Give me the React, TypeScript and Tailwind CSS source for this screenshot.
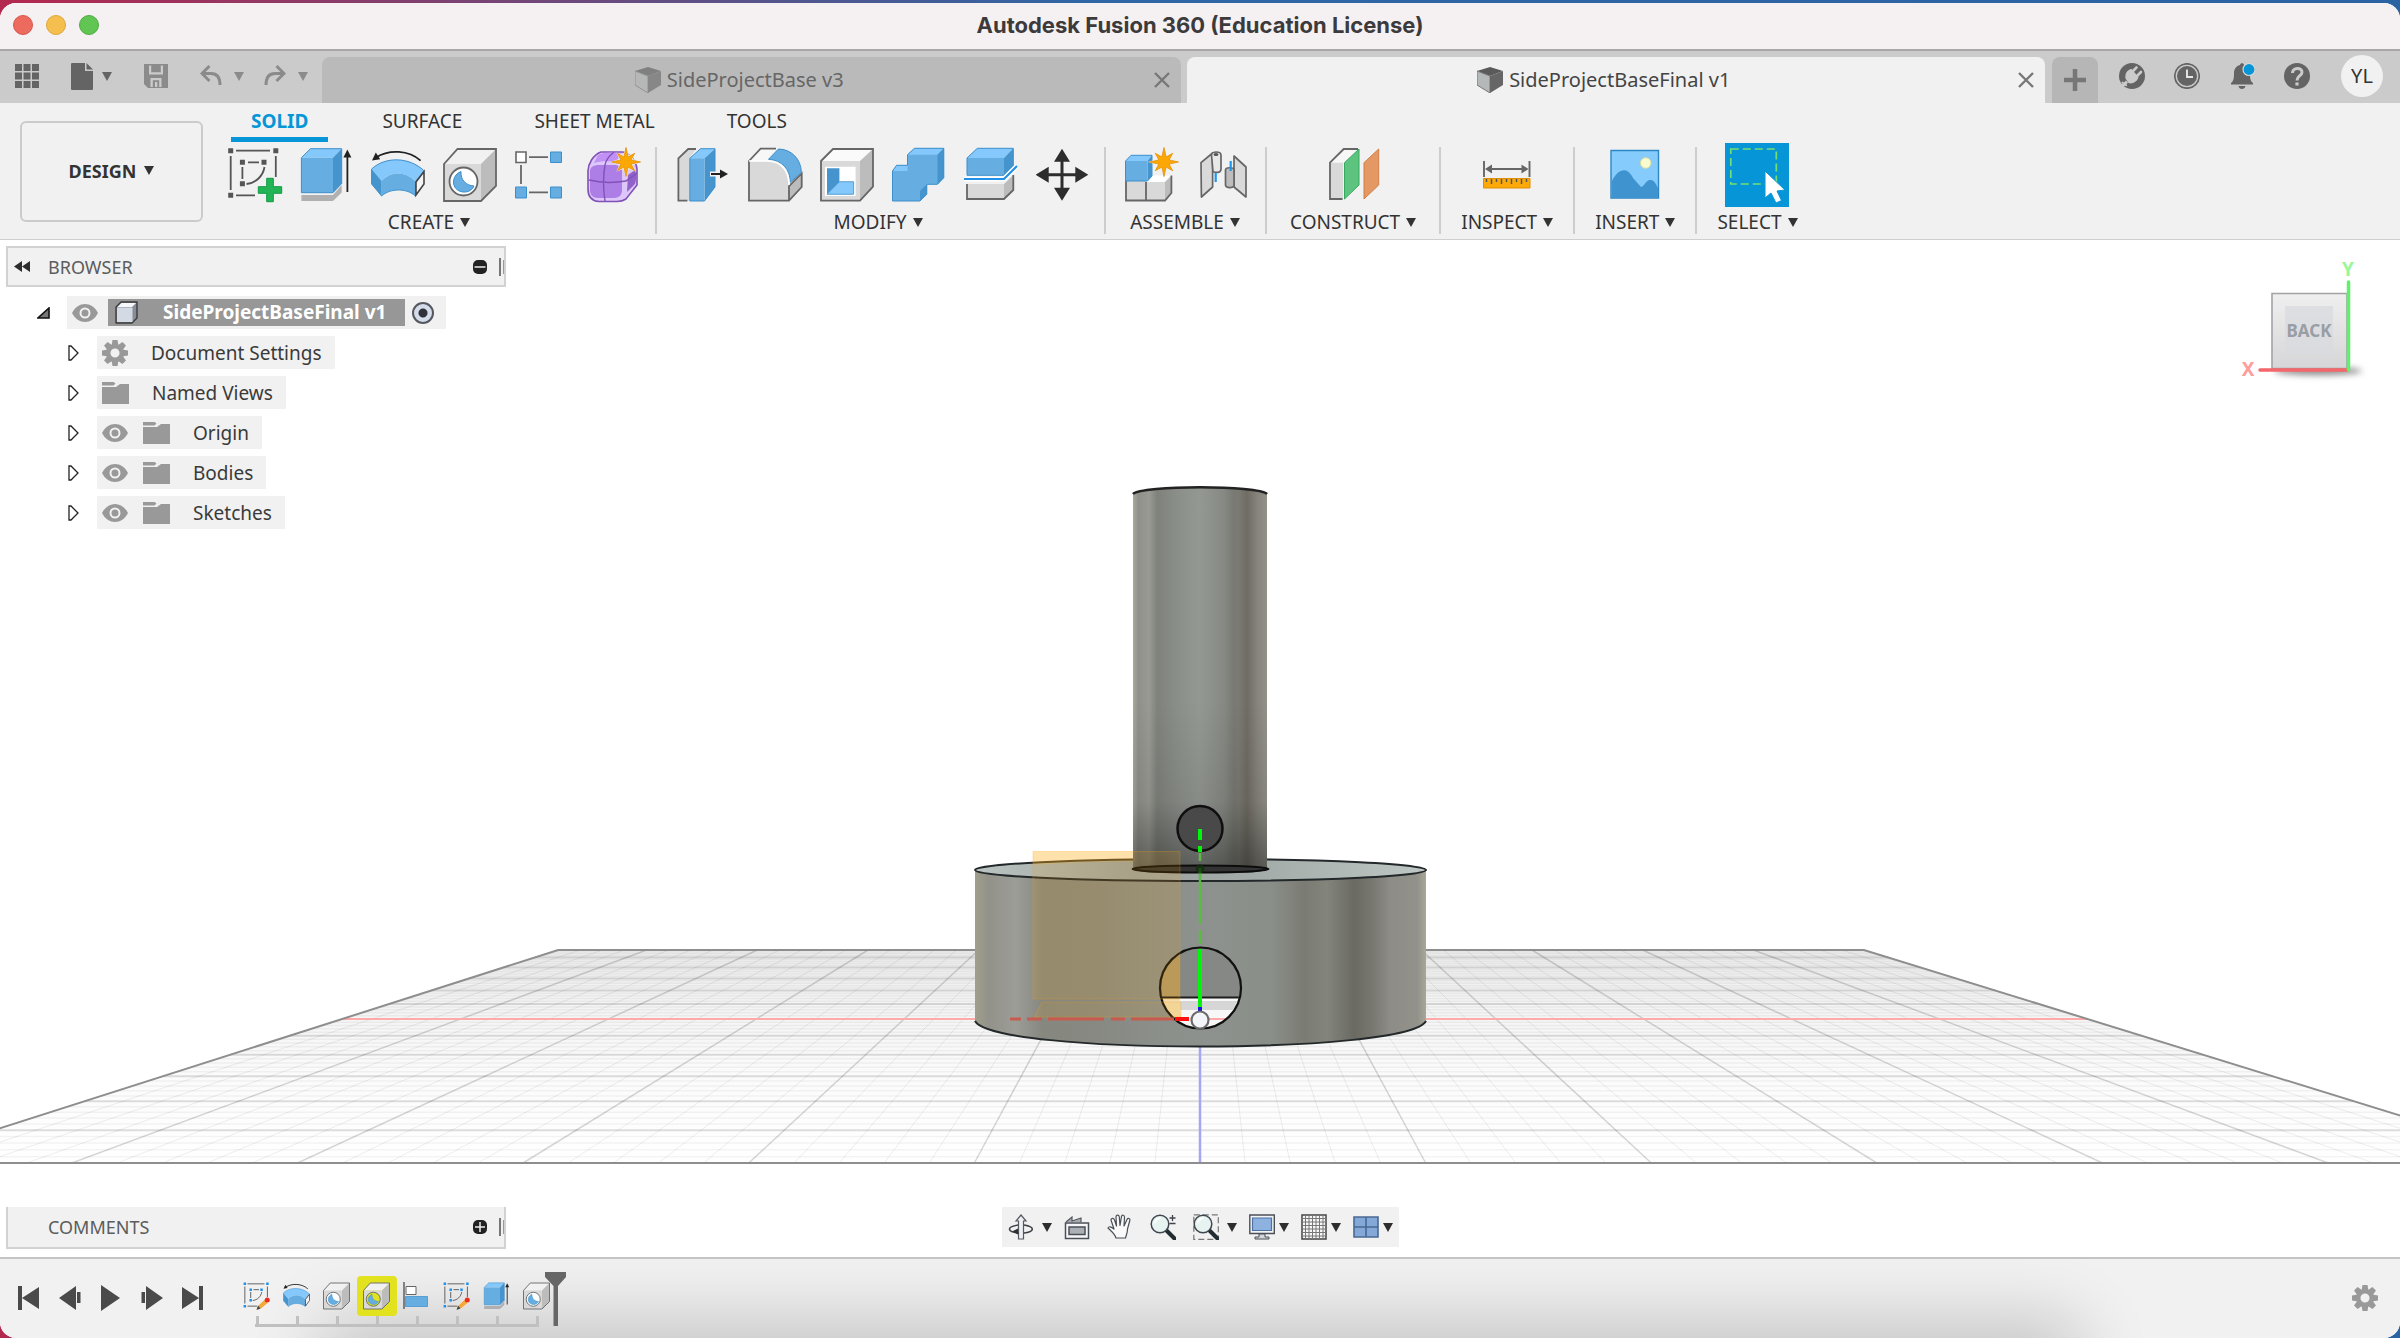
import { useState } from 'react';
import type { ReactNode } from 'react';

const BLUE = '#66aee2';
const BLUE_LIGHT = '#85c8fb';
const BLUE_DARK = '#4594cd';
const BLUE_LINE = '#3d8fcb';
const GRAY = '#d9d9d9';
const LINE = '#666666';

const starPoints = (cx: number, cy: number, outer: number, inner: number) =>
  Array.from({ length: 16 }, (_, i) => {
    const angle = (Math.PI / 8) * i - Math.PI / 2;
    const r = i % 2 ? inner : i % 4 ? outer * 0.85 : outer;
    return `${(cx + r * Math.cos(angle)).toFixed(1)},${(cy + r * Math.sin(angle)).toFixed(1)}`;
  }).join(' ');

function Caret({ className = 'text-[#333]' }: { className?: string }) {
  return (
    <svg viewBox="0 0 10 9" className={`h-[9px] w-[10px] shrink-0 ${className}`} fill="currentColor">
      <path d="M0 0h10L5 9z" />
    </svg>
  );
}

function Icon({ children, className = 'h-14 w-14' }: { children: ReactNode; className?: string }) {
  return (
    <svg viewBox="0 0 56 56" className={`shrink-0 ${className}`} fill="none">
      {children}
    </svg>
  );
}

/* ---------- shared shapes (ribbon and timeline) ---------- */

const SketchShape = ({ node = '#555' }: { node?: string }) => (
  <>
    <path d="M9 3.7h34M3.7 9v34M48.8 9v21M9 48.3h19M21 15.3h11M15.4 20v12" stroke="#555" strokeWidth="1.8" />
    <path d="M37.5 20C36 29 29 36 19.5 37" stroke="#555" strokeWidth="1.8" />
    <path
      d="M1.2 1.2h5v5h-5zM46.3 1.2h5v5h-5zM1.2 45.8h5v5h-5zM12.9 12.8h5v5h-5zM34.5 12.8h5v5h-5zM12.9 34.2h5v5h-5z"
      fill={node}
    />
  </>
);

const ExtrudeShape = () => (
  <>
    <path d="M2.4 48H34l8.7-10v7.5L34 54H2.4z" fill="#b0b0b0" />
    <path d="M2.4 10.7l9.1-9h31.2l-8.7 9z" fill={BLUE_LIGHT} />
    <path d="M34 10.7l8.7-9v34.8L34 45.7z" fill={BLUE_DARK} />
    <path d="M2.4 10.7H34v35H2.4z" fill={BLUE} />
    <path d="M2.4 10.7l9.1-9h31.2v34.8L34 45.7H2.4z" stroke={BLUE_LINE} />
    <path d="M48.4 8v37" stroke="#222" strokeWidth="1.8" />
    <path d="M48.4 2.5l4 8h-8z" fill="#222" />
  </>
);

const RevolveShape = () => (
  <>
    <path d="M.6 22C14 9.5 38 9.5 53 23.7l-8.6 11C35 24 20 24 10.6 34z" fill={BLUE_LIGHT} />
    <path d="M10.6 34C20 24 35 24 44.4 34.7V49C36 41 19 41 10.6 49z" fill={BLUE} />
    <path d="M.6 22l10 12v15L.6 37z" fill={BLUE_DARK} />
    <path d="M.6 22C14 9.5 38 9.5 53 23.7l-8.6 11V49C36 41 19 41 10.6 49L.6 37z" stroke={BLUE_LINE} />
    <path d="M45 35l8-10.5V37l-8 11z" fill="#f4f4f4" stroke="#444" strokeWidth="1.6" />
    <path d="M5 10.5C18 2 38 3 49.6 13.7" stroke="#222" strokeWidth="1.8" />
    <path d="M1 13.5l3.8-8 4.4 6.7z" fill="#222" />
  </>
);

const HoleShape = ({ fill = '#fff' }: { fill?: string }) => (
  <>
    <path d="M1 17L14.5 2H53L38 17z" fill="#f1f1f1" />
    <path d="M38 17L53 2v37L38 54z" fill="#bcbcbc" />
    <path d="M1 17h37v37H1z" fill={GRAY} />
    <path d="M1 17L14.5 2H53v37L38 54H1z" stroke={LINE} strokeWidth="1.8" />
    <circle cx="20.5" cy="34.5" r="14" fill={fill} stroke={LINE} strokeWidth="1.8" />
    <path d="M18 24.5c-8.5 3-10 14-3.5 18.5 6 4 14 2 16.5-4-8-.5-13.5-6-13-14.5z" fill={BLUE} stroke={BLUE_LINE} />
  </>
);

const PencilShape = () => (
  <>
    <path d="M27 56l3-9 13-12 7 7-13 11z" fill="#f3a93c" stroke="#f1f1f1" strokeWidth="1.5" />
    <path d="M27 56l3-9 5 6z" fill="#444" />
    <circle cx="48.5" cy="36" r="5" fill="#ec2d23" />
  </>
);

const Star = () => (
  <>
    <polygon points={starPoints(39, 15, 16, 7.5)} fill="#f1f1f1" />
    <polygon points={starPoints(39, 15, 14.5, 5.5)} fill="#fda703" stroke="#e39007" strokeWidth=".8" />
  </>
);

/* ---------- ribbon ---------- */

type Tool = { name: string; icon: ReactNode };
type ToolGroup = { label: string; tools: Tool[]; className: string; labelClass?: string };

const groups: ToolGroup[] = [
  {
    label: 'CREATE',
    className: 'pl-5 pr-3',
    labelClass: 'mr-3',
    tools: [
      {
        name: 'Create Sketch',
        icon: (
          <Icon>
            <SketchShape />
            <path d="M39.7 31.3h6.6v8.4h8.4v6.6h-8.4v8.4h-6.6v-8.4h-8.4v-6.6h8.4z" fill="#22b455" stroke="#0f9a41" />
          </Icon>
        ),
      },
      { name: 'Extrude', icon: <Icon><ExtrudeShape /></Icon> },
      { name: 'Revolve', icon: <Icon><RevolveShape /></Icon> },
      { name: 'Hole', icon: <Icon><HoleShape /></Icon> },
      {
        name: 'Rectangular Pattern',
        icon: (
          <Icon>
            <path d="M14 10.2h19M6 18v19M14 45.3h19" stroke={LINE} strokeWidth="1.8" />
            <path d="M1 5h10v10.5H1z" fill="#fff" stroke={LINE} strokeWidth="1.6" />
            <path d="M35.5 5h11v10.5h-11zM.5 40h11v11H.5zM35.5 40h11v11h-11z" fill={BLUE} stroke={BLUE_LINE} />
          </Icon>
        ),
      },
      {
        name: 'Create Form',
        icon: (
          <Icon>
            <path d="M1 24C1 17 6 8 14 5h21c6 0 14 8 15 17v16L39 52c-3 2-6 2.5-9 2.5H12C4 54 1 49 1 42z" fill="#dcc6fa" stroke="#8151b8" strokeWidth="1.6" />
            <path d="M11 8c7-3 17-3 23-1l-5 8c-8-1-16-1-22 1z" fill="#c191f6" />
            <path d="M3 24c0-4 4-6 9-6h16c5 0 7 3 7 7v18c0 5-3 8-8 8H11c-5 0-8-3-8-8z" fill="#ad7ee6" />
            <path d="M41 28l7-5c2 5 1 11 0 14l-8 8z" fill="#9062c9" />
            <path d="M2 33c12 3 25 3 37 1l11-8M18 18c-2 11-2 23 0 36M18 18c1-6 4-9 9-13" stroke="#8151b8" strokeWidth="1.4" />
            <Star />
          </Icon>
        ),
      },
    ],
  },
  {
    label: 'MODIFY',
    className: 'pl-[19px] pr-3',
    labelClass: 'mr-3',
    tools: [
      {
        name: 'Press Pull',
        icon: (
          <Icon>
            <path d="M2.4 11.3l9.8-9.6H20l-7 10v42H2.4z" fill={GRAY} />
            <path d="M20 2h-7.8L2.4 11.3v42.4h9" stroke={LINE} strokeWidth="1.8" />
            <path d="M13.8 11.3l10.7-9.6H39l-10.5 9.6z" fill={BLUE_LIGHT} />
            <path d="M28.5 11.3L39 1.7V40L28.5 54z" fill={BLUE_DARK} />
            <path d="M13.8 11.3h14.7V54H13.8z" fill={BLUE} />
            <path d="M13.8 11.3l10.7-9.6H39V40L28.5 54H13.8z" stroke={BLUE_LINE} />
            <path d="M34 27h12" stroke="#f1f1f1" strokeWidth="5" />
            <path d="M35 27h10" stroke="#222" strokeWidth="2.2" />
            <path d="M44 22.5l8 4.5-8 4.5z" fill="#222" />
          </Icon>
        ),
      },
      {
        name: 'Fillet',
        icon: (
          <Icon>
            <path d="M1 14L12.6 1.7H30L20.5 14z" fill="#f7f7f7" />
            <path d="M41 39l12.7-12.7V40L41 53.7z" fill="#bcbcbc" />
            <path d="M1 14h19.5C33 14 41 22 41 35v18.7H1z" fill={GRAY} />
            <path d="M28 1.7H12.6L1 14v39.7h40L53.7 40V26.3L41 39v14" stroke={LINE} strokeWidth="1.8" />
            <path d="M20.5 12.3L30.4 2C43 2 53.3 12 53.3 25.3l-11 10C42 22 34 13 20.5 12.3z" fill={BLUE} stroke={BLUE_LINE} />
            <path d="M1 14h18C33 14 41 23 41 38" stroke="#fff" strokeWidth="1.6" />
          </Icon>
        ),
      },
      {
        name: 'Shell',
        icon: (
          <Icon>
            <path d="M1 14L13 2h40L40 14z" fill="#fafafa" />
            <path d="M40 14L53 2v37.7l-13 14z" fill="#bcbcbc" />
            <path d="M1 14h39v39.7H1z" fill={GRAY} />
            <path d="M1 14L13 2h40v37.7l-13 14H1z" stroke={LINE} strokeWidth="1.8" />
            <path d="M5 19.7h30.6V49H5z" fill="#fff" />
            <path d="M7 21.3h12.4v13.4L7 47.3z" fill={BLUE_DARK} />
            <path d="M7 47.3l12.4-12.6h14.2v12.6z" fill={BLUE_LIGHT} stroke={BLUE_LINE} strokeWidth=".8" />
          </Icon>
        ),
      },
      {
        name: 'Combine',
        icon: (
          <Icon>
            <path d="M.5 24l4-5.7h11V7.7l7-6.4h29.3v29.4l-6.3 6.6H34.8v10L28 54H.5z" fill={BLUE} />
            <path d="M15.5 7.7l7-6.4h29.3l-6.3 6.4zM.5 24l4-5.7h11V24z" fill={BLUE_LIGHT} />
            <path d="M45.5 7.7l6.3-6.4v29.4l-6.3 6.6zM28 44l6.8-6.7v10L28 54z" fill={BLUE_DARK} />
            <path d="M.5 24l4-5.7h11V7.7l7-6.4h29.3v29.4l-6.3 6.6H34.8v10L28 54H.5z" stroke={BLUE_LINE} />
          </Icon>
        ),
      },
      {
        name: 'Split Body',
        icon: (
          <Icon>
            <path d="M3 37h37v15H3z" fill={GRAY} />
            <path d="M40 37l9.3-9v15L40 52z" fill="#bcbcbc" />
            <path d="M3 37v15h37l9.3-9V28" stroke={LINE} strokeWidth="1.8" />
            <path d="M3 11l10.3-9.7h36L40 11z" fill={BLUE_LIGHT} />
            <path d="M40 11l9.3-9.7V19L40 28.3z" fill={BLUE_DARK} />
            <path d="M3 11h37v17.3H3z" fill={BLUE} />
            <path d="M3 11l10.3-9.7h36V19L40 28.3H3z" stroke={BLUE_LINE} />
            <path d="M0 32h40l13-13" stroke="#fff" strokeWidth="5" />
            <path d="M0 32h40l13-13" stroke="#2290e6" strokeWidth="2.2" />
          </Icon>
        ),
      },
      {
        name: 'Move/Copy',
        icon: (
          <Icon>
            <path d="M26 10v35M9 27.7h34" stroke="#2d2d2d" strokeWidth="3" />
            <path d="M26 1.7l8 13H18zM26 53.7l8-13H18zM-.3 27.7l13-8v16zM52.3 27.7l-13-8v16z" fill="#2d2d2d" />
          </Icon>
        ),
      },
    ],
  },
  {
    label: 'ASSEMBLE',
    className: 'pl-[19px] pr-3',
    labelClass: 'mr-2',
    tools: [
      {
        name: 'New Component',
        icon: (
          <Icon>
            <path d="M1 34h20v19.5H1zM21 35h19v18.5H21z" fill={GRAY} />
            <path d="M21 35l6-6.5h19.4L40 35z" fill="#fff" />
            <path d="M40 35l6.4-6.5V46L40 53.5z" fill="#bcbcbc" />
            <path d="M1 34v19.5h39l6.4-7.5V28.5M21 35v18" stroke={LINE} strokeWidth="1.8" />
            <path d="M.5 14L6 8.3h21L22.5 14z" fill={BLUE_LIGHT} />
            <path d="M22.5 14L27 8.3V29l-4.5 5z" fill={BLUE_DARK} />
            <path d="M.5 14h22v20H.5z" fill={BLUE} />
            <path d="M.5 14L6 8.3h21V29l-4.5 5H.5z" stroke={BLUE_LINE} />
            <Star />
          </Icon>
        ),
      },
      {
        name: 'Joint',
        icon: (
          <Icon>
            <path d="M4 15.7L15.6 6v34L4.4 50z" fill={GRAY} stroke={LINE} strokeWidth="1.7" strokeLinejoin="round" />
            <path d="M14.5 8c0-4 9.5-4 9.5 0v14c0 4-5 4-8 2.5z" fill="#e8e8e8" stroke={LINE} strokeWidth="1.7" />
            <ellipse cx="19" cy="7.5" rx="2.5" ry="1.5" fill="#555" />
            <path d="M18.7 26v9" stroke="#1f96ee" strokeWidth="2.2" />
            <path d="M37 9l12 11v30L37 40z" fill={GRAY} stroke={LINE} strokeWidth="1.7" strokeLinejoin="round" />
            <path d="M28.5 23c0-3 8.5-3 8.5 0v16c-2 2.5-8.5 2-8.5-1z" fill="#bdbdbd" stroke={LINE} strokeWidth="1.7" />
            <path d="M33.7 14v10" stroke="#1f96ee" strokeWidth="2.2" />
          </Icon>
        ),
      },
    ],
  },
  {
    label: 'CONSTRUCT',
    className: 'px-[23px]',
    tools: [
      {
        name: 'Offset Plane',
        icon: (
          <Icon>
            <path d="M5 15.7L18.7 2H33L18 15.7z" fill="#f7f7f7" />
            <path d="M5 15.7h13V52H5z" fill={GRAY} />
            <path d="M33 2H18.7L5 15.7V52h12.5" stroke={LINE} strokeWidth="1.8" />
            <path d="M19.5 15.7L34 2v36L19.5 52z" fill="#5cc47f" stroke="#37a95f" />
            <path d="M39 15.7L53.7 2v36L39 52z" fill="#e49964" stroke="#cf7f47" />
          </Icon>
        ),
      },
    ],
  },
  {
    label: 'INSPECT',
    className: 'px-5',
    tools: [
      {
        name: 'Measure',
        icon: (
          <Icon>
            <path d="M5 14v16M50.5 14v16M10 22h36" stroke={LINE} strokeWidth="1.9" />
            <path d="M6 22l7-4.5v9zM49.5 22l-7-4.5v9z" fill={LINE} />
            <path d="M4.5 31.5H51V41H4.5z" fill="#fda908" stroke="#df8f05" />
            <path d="M7.5 32v3M12.5 32v5M17.5 32v3M22.5 32v5M27.5 32v3M32.5 32v5M37.5 32v3M42.5 32v5M47.5 32v3" stroke="#555" strokeWidth="1.5" />
          </Icon>
        ),
      },
    ],
  },
  {
    label: 'INSERT',
    className: 'px-5',
    tools: [
      {
        name: 'Canvas',
        icon: (
          <Icon>
            <path d="M4 3.5h47.5V51H4z" fill="#85ccfd" stroke="#2e86c5" strokeWidth="1.4" />
            <circle cx="38.7" cy="16" r="5.3" fill="#fbfbd0" stroke="#d8d9a2" />
            <path d="M5 34c6-12 15-15 21-3l8 9c4-1 5-8 10-7 3 0 5 4 7 8v10H5z" fill="#3f93cf" />
          </Icon>
        ),
      },
    ],
  },
  {
    label: 'SELECT',
    className: 'px-5',
    tools: [
      {
        name: 'Select',
        icon: (
          <span className="-my-1 block">
            <svg viewBox="0 0 64 64" className="h-16 w-16 bg-[#0696d7]" fill="none">
              <path d="M5.8 6h45.5v35H5.8z" stroke="#74de72" strokeWidth="1.7" strokeDasharray="8 4" />
              <path d="M40 28v27l6-5 5 10 5.5-2.5L52 48l8-1z" fill="#fff" stroke="#0696d7" />
            </svg>
          </span>
        ),
      },
    ],
  },
];

const workspaceTabs = ['SOLID', 'SURFACE', 'SHEET METAL', 'TOOLS'];

function Ribbon() {
  const [activeTab, setActiveTab] = useState('SOLID');

  return (
    <div className="flex border-b border-[#cfcfcf] bg-[#f1f1f1] pb-[5px]">
      <button
        type="button"
        className="ml-5 mt-[18px] flex h-[101px] w-[183px] shrink-0 items-center justify-center gap-2 rounded-md border-2 border-[#cbcbcb] pb-[2px] text-lg font-bold"
      >
        DESIGN <Caret />
      </button>
      <div className="ml-1">
        <div className="ml-6 flex h-[39px] gap-9">
          {workspaceTabs.map((tab, i) => (
            <button
              key={tab}
              type="button"
              onClick={() => setActiveTab(tab)}
              className={`border-b-[5px] pt-[2px] text-[19px] leading-8 ${i === 0 ? 'px-5' : 'px-[18px]'} ${
                tab === activeTab ? 'border-[#0696d7] font-bold text-[#0696d7]' : 'border-transparent'
              }`}
            >
              {tab}
            </button>
          ))}
        </div>
        <div className="mt-[5px] flex">
          {groups.map((group, i) => (
            <div
              key={group.label}
              className={`flex flex-col items-center ${group.className} ${i < groups.length - 1 ? 'border-r-2 border-[#cdcdcd]' : ''}`}
            >
              <div className="flex h-14 gap-4">
                {group.tools.map((tool) => (
                  <button key={tool.name} type="button" aria-label={tool.name}>
                    {tool.icon}
                  </button>
                ))}
              </div>
              <button
                type="button"
                className={`mt-[7px] flex h-6 items-center gap-[6px] text-[19px] leading-6 ${group.labelClass ?? ''}`}
              >
                {group.label} <Caret />
              </button>
            </div>
          ))}
        </div>
      </div>
    </div>
  );
}

/* ---------- title bar and document tabs ---------- */

function TitleBar() {
  return (
    <div className="relative flex h-[48px] items-center justify-center border-b-2 border-[#a9a7a8] bg-[#f5f1f3] pb-[2px]">
      <div className="absolute left-[13px] flex gap-[13px]">
        <button type="button" aria-label="Close" className="h-5 w-5 rounded-full border border-[#d9564b] bg-[#ec6a5e]" />
        <button type="button" aria-label="Minimize" className="h-5 w-5 rounded-full border border-[#dda63c] bg-[#f4bf4f]" />
        <button type="button" aria-label="Zoom" className="h-5 w-5 rounded-full border border-[#51ab42] bg-[#61c554]" />
      </div>
      <h1 className="font-['Inter',sans-serif] text-[22px] leading-7 font-bold text-[#3c3a3b]">
        Autodesk Fusion 360 (Education License)
      </h1>
    </div>
  );
}

function CubeIcon() {
  return (
    <svg viewBox="0 0 26 26" className="h-[26px] w-[26px]">
      <path d="M0 4L13 0l13 4-13 5z" fill="#5a5a5a" />
      <path d="M0 4l13 5v17L0 18z" fill="#b5b8b8" stroke="#777" />
      <path d="M26 4L13 9v17l13-8z" fill="#666" />
    </svg>
  );
}

function DocumentTab({ title, active }: { title: string; active?: boolean }) {
  return (
    <div
      className={`relative flex h-[46px] flex-1 items-center justify-center gap-[6px] rounded-t-lg pr-6 ${
        active ? 'bg-[#f1f1f1] text-[#444]' : 'bg-[#bababa] text-[#666]'
      }`}
    >
      <span className={active ? '' : 'opacity-60'}>
        <CubeIcon />
      </span>
      <button type="button" className="text-xl leading-6">
        {title}
      </button>
      <button type="button" aria-label={`Close ${title}`} className="absolute right-[11px] text-[#777]">
        <svg viewBox="0 0 16 16" className="h-4 w-4" stroke="currentColor" strokeWidth="2.4">
          <path d="M1 1l14 14M15 1L1 15" />
        </svg>
      </button>
    </div>
  );
}

function DocumentBar() {
  return (
    <div className="flex h-[52px] items-end bg-[#cbcbcb]">
      <div className="flex h-[52px] w-[322px] shrink-0 items-center pb-[2px] pl-[15px] text-[#646464]">
        <button type="button" aria-label="Data Panel">
          <svg viewBox="0 0 24 24" className="h-6 w-6" fill="currentColor">
            <path d="M0 0h7v7H0zM8.5 0h7v7h-7zM17 0h7v7h-7zM0 8.5h7v7H0zM8.5 8.5h7v7h-7zM17 8.5h7v7h-7zM0 17h7v7H0zM8.5 17h7v7h-7zM17 17h7v7h-7z" />
          </svg>
        </button>
        <button type="button" aria-label="File" className="ml-8 flex items-center gap-[9px]">
          <svg viewBox="0 0 22 27" className="h-[27px] w-[22px]" fill="currentColor">
            <path d="M1 0h13v8h8v18a1 1 0 0 1-1 1H1a1 1 0 0 1-1-1V1a1 1 0 0 1 1-1zM15.5 0L22 6.5h-6.5z" />
          </svg>
          <Caret className="text-[#646464]" />
        </button>
        <button type="button" aria-label="Save" className="ml-8 text-[#8b8b8b]">
          <svg viewBox="0 0 24 24" className="h-6 w-6" fill="currentColor">
            <path fillRule="evenodd" d="M0 0h24v24H4l-4-4zM5 1.5v9h14v-9h-2.2v6.8H7.2V1.5zM6.5 14v9h2.3v-6.8h6.4V23h2.3v-9zM11 18h2.3v5H11z" />
          </svg>
        </button>
        <button type="button" aria-label="Undo" className="ml-8 flex items-center gap-3 text-[#8b8b8b]">
          <svg viewBox="0 0 22 22" className="h-[22px] w-[22px]" fill="none" stroke="currentColor" strokeWidth="3">
            <path d="M9.5 1L2 8.5 9.5 16M2.5 8.5H11c6 0 9 4 9 11.5" />
          </svg>
          <Caret className="text-[#8b8b8b]" />
        </button>
        <button type="button" aria-label="Redo" className="ml-5 flex items-center gap-3 text-[#8b8b8b]">
          <svg viewBox="0 0 22 22" className="h-[22px] w-[22px]" fill="none" stroke="currentColor" strokeWidth="3">
            <path d="M12.5 1L20 8.5 12.5 16M19.5 8.5H11c-6 0-9 4-9 11.5" />
          </svg>
          <Caret className="text-[#8b8b8b]" />
        </button>
      </div>
      <div className="flex flex-1 gap-[6px]">
        <DocumentTab title="SideProjectBase v3" />
        <DocumentTab title="SideProjectBaseFinal v1" active />
      </div>
      <button
        type="button"
        aria-label="New Design"
        className="ml-[7px] flex h-[46px] w-[46px] items-center justify-center rounded-t-lg bg-[#b6b6b6] text-[#777]"
      >
        <svg viewBox="0 0 22 22" className="h-[22px] w-[22px]" stroke="currentColor" strokeWidth="4.5">
          <path d="M11 0v22M0 11h22" />
        </svg>
      </button>
      <div className="flex h-[52px] items-center gap-[29px] pb-[2px] pl-[21px] pr-[17px] text-[#646464]">
        <button type="button" aria-label="Extensions">
          <svg viewBox="0 0 26 26" className="h-[26px] w-[26px]">
            <circle cx="13" cy="13" r="13" fill="currentColor" />
            <path d="M6.5 15.5c-1-5 2-9 6-9.5l7 8c-1 4.5-6 7.5-10 6z" fill="#cbcbcb" />
            <path d="M13 9l4.5-4.5M17.5 13.5L22 9" stroke="#cbcbcb" strokeWidth="2.6" strokeLinecap="round" />
            <path d="M8 18.5L2.5 24" stroke="#cbcbcb" strokeWidth="3" />
            <path d="M3 19c1.5 2 3 3 5 3.5" stroke="#cbcbcb" strokeWidth="2" fill="none" />
          </svg>
        </button>
        <button type="button" aria-label="Job Status">
          <svg viewBox="0 0 26 26" className="h-[26px] w-[26px]" fill="none">
            <circle cx="13" cy="13" r="12.2" stroke="currentColor" strokeWidth="1.7" />
            <circle cx="13" cy="13" r="10" fill="currentColor" />
            <path d="M13 6.5V14h6" stroke="#e6e6e6" strokeWidth="1.9" />
          </svg>
        </button>
        <button type="button" aria-label="Notifications">
          <svg viewBox="0 0 26 26" className="h-[26px] w-[26px]">
            <path d="M11 2c0-2.5 4-2.5 4 0 4 1 6 4 6 8 0 6 .5 8 3 10v1.5H2V20c2.5-2 3-4 3-10 0-4 2-7 6-8zM9.5 23h7c-.5 4-6.5 4-7 0z" fill="currentColor" />
            <circle cx="20" cy="6.5" r="6" fill="#0696d7" stroke="#d6d6d6" strokeWidth="1.2" />
          </svg>
        </button>
        <button type="button" aria-label="Help">
          <svg viewBox="0 0 26 26" className="h-[26px] w-[26px]" fill="none">
            <circle cx="13" cy="13" r="13" fill="currentColor" />
            <path d="M8.5 10c0-6 9.5-6 9.5-.8 0 3.4-5 3.6-5 8.2" stroke="#cbcbcb" strokeWidth="3" />
            <path d="M11.4 19.5h3.2v3h-3.2z" fill="#cbcbcb" />
          </svg>
        </button>
        <button
          type="button"
          className="ml-[2px] h-[42px] w-[42px] rounded-full bg-[#f1f1f1] text-xl leading-[42px] text-[#333]"
        >
          YL
        </button>
      </div>
    </div>
  );
}

/* ---------- 3D scene ---------- */

const HORIZON = 745;
const FRONT = 1163;
const BACK = 950;
const depthToY = (j: number) => HORIZON + 1 / (0.00365 - 0.0002107 * j);
const colToX = (u: number, y: number) => 1200 + u * 0.5398 * (y - HORIZON);

const LEFT_COL = -5.8;
const RIGHT_COL = 6;

function Grid() {
  const cols = Array.from({ length: 59 }, (_, i) => i - 29);
  const rows = Array.from({ length: 59 }, (_, i) => i - 29);
  const outline = [
    [LEFT_COL, BACK],
    [RIGHT_COL, BACK],
    [RIGHT_COL, FRONT],
    [LEFT_COL, FRONT],
  ]
    .map(([u, y]) => `${colToX(u, y)},${y}`)
    .join(' ');

  return (
    <g>
      <polygon points={outline} fill="url(#floor)" />
      {cols.map((c) => (
        <line
          key={`c${c}`}
          x1={colToX(c / 5, BACK)}
          y1={BACK}
          x2={colToX(c / 5, FRONT)}
          y2={FRONT}
          stroke="#000"
          strokeOpacity={c % 5 ? 0.07 : 0.16}
          strokeWidth={c % 5 ? 1 : 1.5}
        />
      ))}
      {rows.map((r) => {
        const y = depthToY(r / 5);
        return (
          <line
            key={`r${r}`}
            x1={colToX(LEFT_COL, y)}
            y1={y}
            x2={colToX(RIGHT_COL, y)}
            y2={y}
            stroke="#000"
            strokeOpacity={r % 5 ? 0.045 : 0.13}
            strokeWidth={r % 5 ? 1.5 : 2}
          />
        );
      })}
      <line x1={colToX(LEFT_COL, 1019)} y1="1019" x2={colToX(RIGHT_COL, 1019)} y2="1019" stroke="#ffa9a9" strokeWidth="2" />
      <line x1="1200" y1="1019" x2="1200" y2={FRONT} stroke="#a6a6f6" strokeWidth="2.5" />
      <polygon points={outline} fill="none" stroke="#8e8e8e" strokeWidth="2" />
    </g>
  );
}

function Scene() {
  return (
    <svg viewBox="0 240 2400 1017" preserveAspectRatio="xMidYMid slice" className="absolute inset-0 h-full w-full">
      <defs>
        <linearGradient id="floor" x1="0" y1="0" x2="0" y2="1">
          <stop offset="0" stopColor="#eeeeee" />
          <stop offset=".6" stopColor="#fbfbfb" />
          <stop offset="1" stopColor="#ffffff" />
        </linearGradient>
        <linearGradient id="disc">
          <stop offset="0" stopColor="#a09f8c" />
          <stop offset=".03" stopColor="#92928a" />
          <stop offset=".09" stopColor="#9c9d97" />
          <stop offset=".15" stopColor="#86877f" />
          <stop offset=".28" stopColor="#878982" />
          <stop offset=".4" stopColor="#8b8f8a" />
          <stop offset=".52" stopColor="#8e928e" />
          <stop offset=".66" stopColor="#8a8e88" />
          <stop offset=".73" stopColor="#7a7b73" />
          <stop offset=".78" stopColor="#83857d" />
          <stop offset=".84" stopColor="#6a6a63" />
          <stop offset=".88" stopColor="#77766f" />
          <stop offset=".92" stopColor="#8d8c86" />
          <stop offset=".98" stopColor="#92918a" />
          <stop offset="1" stopColor="#a9a797" />
        </linearGradient>
        <linearGradient id="pillar">
          <stop offset="0" stopColor="#a9aa9c" />
          <stop offset=".04" stopColor="#8f9089" />
          <stop offset=".12" stopColor="#999a93" />
          <stop offset=".18" stopColor="#7f827c" />
          <stop offset=".35" stopColor="#8c908b" />
          <stop offset=".5" stopColor="#949893" />
          <stop offset=".68" stopColor="#868983" />
          <stop offset=".75" stopColor="#787a73" />
          <stop offset=".79" stopColor="#7b7a72" />
          <stop offset=".85" stopColor="#6f6c64" />
          <stop offset=".93" stopColor="#86847c" />
          <stop offset="1" stopColor="#93938a" />
        </linearGradient>
        <linearGradient id="pillarShade" x1="0" y1="0" x2="0" y2="1">
          <stop offset="0" stopColor="#000" stopOpacity="0" />
          <stop offset=".6" stopColor="#000" stopOpacity=".08" />
          <stop offset="1" stopColor="#000" stopOpacity=".38" />
        </linearGradient>
        <linearGradient id="discTop">
          <stop offset="0" stopColor="#bcc4c1" />
          <stop offset=".35" stopColor="#9aa19e" />
          <stop offset=".65" stopColor="#a5adaa" />
          <stop offset="1" stopColor="#bfc7c4" />
        </linearGradient>
        <clipPath id="borehole">
          <circle cx="1200" cy="988" r="40" />
        </clipPath>
      </defs>

      <Grid />

      {/* base disc */}
      <path d="M975 870v151c18 34 433 34 451 0V870z" fill="url(#disc)" />
      <path d="M975 1021c18 34 433 34 451 0" fill="none" stroke="#23282a" strokeWidth="2" />
      <ellipse cx="1200.5" cy="870" rx="225.5" ry="11" fill="url(#discTop)" stroke="#23282a" strokeWidth="2" />

      {/* shaft */}
      <path d="M1133 494c8-9 126-9 134 0v375h-134z" fill="url(#pillar)" />
      <path d="M1133 700h134v169h-134z" fill="url(#pillarShade)" />
      <path d="M1133 494c8-9 126-9 134 0" fill="none" stroke="#222" strokeWidth="2.5" />
      <ellipse cx="1200.5" cy="869" rx="68" ry="3.5" fill="#333" stroke="#0c0c0c" strokeWidth="2" />
      <circle cx="1200" cy="828.5" r="22.5" fill="#494949" stroke="#0f0f0f" strokeWidth="2.5" />

      {/* through hole in the disc */}
      <g clipPath="url(#borehole)">
        <path d="M1158 946h84v84h-84z" fill="#858885" />
        <path d="M1158 946h22v52h-22z" fill="#b09868" />
        <path d="M1158 998h84v32h-84z" fill="#f7f7f7" />
        <path d="M1158 1001h84v9h-84z" fill="#d6d6d6" />
        <path d="M1158 998h22l1 21h-23z" fill="#f3dcae" />
        <path d="M1158 997.5h84" stroke="#1d1d1d" strokeWidth="2" />
        <path d="M1200 1019h42" stroke="#ffa9a9" strokeWidth="2" />
      </g>
      <circle cx="1200.5" cy="988" r="40.5" fill="none" stroke="#111" strokeWidth="2.2" />

      {/* origin planes */}
      <path d="M1033 851.5h100v10c-35 0-70 1.5-100 3.5z" fill="#ffb226" fillOpacity=".25" />
      <path d="M1033 851.5h147V999h-147z" fill="#ffa200" fillOpacity=".14" stroke="#ffa200" strokeOpacity=".25" />
      <path d="M1042 1002h139v15h-147z" fill="#ffa200" fillOpacity=".12" stroke="#ffa200" strokeOpacity=".25" />

      {/* origin axes */}
      <path d="M1010 1019h11M1027 1019h15M1048 1019h56M1111 1019h14M1131 1019h43" stroke="#c95a4e" strokeWidth="3" />
      <path d="M1175 1019h14" stroke="#ff1010" strokeWidth="4" />
      <path d="M1200 853v8M1200 868v56M1200 930v14" stroke="#5dbb45" strokeWidth="2.5" />
      <circle cx="1200" cy="869" r="4.5" fill="#10300c" fillOpacity=".8" />
      <path d="M1200 829v11M1200 846v6M1200 949v58" stroke="#00f50a" strokeWidth="4" />
      <path d="M1200 1007v5" stroke="#1616e0" strokeWidth="4" />
      <circle cx="1200" cy="1020" r="8.5" fill="#f4f4fb" stroke="#6b6b6b" strokeWidth="2.2" />
    </svg>
  );
}

function ViewCube() {
  return (
    <svg
      viewBox="2226 246 150 150"
      className="h-[150px] w-[150px] font-['Noto_Sans',sans-serif]"
      fontWeight="bold"
      textAnchor="middle"
    >
      <defs>
        <linearGradient id="cubeFace" x1="0" y1="0" x2="0" y2="1">
          <stop offset="0" stopColor="#efefef" />
          <stop offset="1" stopColor="#d6d6d8" />
        </linearGradient>
        <filter id="soft" x="-20%" y="-100%" width="140%" height="300%">
          <feGaussianBlur stdDeviation="3" />
        </filter>
      </defs>
      <ellipse cx="2318" cy="371" rx="44" ry="4" fill="#888" filter="url(#soft)" />
      <path d="M2272 293.5h75v75h-75z" fill="url(#cubeFace)" stroke="#a3a3a6" strokeWidth="1.6" />
      <path d="M2285 306h48v49h-48z" fill="#d9dbdf" fillOpacity=".8" />
      <text x="2309" y="337" fontSize="17" fill="#999da4">
        BACK
      </text>
      <path d="M2260 370h88" stroke="#f4666a" strokeWidth="3.5" strokeLinecap="round" />
      <path d="M2348.5 282v88" stroke="#5df36a" strokeWidth="3.5" strokeLinecap="round" />
      <text x="2248" y="376" fontSize="19" fill="#ff9c9c">
        X
      </text>
      <text x="2348" y="276" fontSize="19" fill="#98f79a">
        Y
      </text>
    </svg>
  );
}

/* ---------- browser tree ---------- */

function EyeIcon() {
  return (
    <svg viewBox="0 0 26 18" className="h-[18px] w-[26px]">
      <path d="M0 9c6-12 20-12 26 0-6 12-20 12-26 0z" fill="#999" />
      <circle cx="13" cy="9" r="4.5" fill="#999" stroke="#f1f1f1" strokeWidth="2" />
    </svg>
  );
}

function FolderIcon() {
  return (
    <svg viewBox="0 0 27 22" className="h-[22px] w-[27px]" fill="#999">
      <path d="M0 0h11.5l2 1.5-2 2H0zM0 5h14l4-3h9v20H0z" />
    </svg>
  );
}

function GearIcon() {
  const teeth = Array.from({ length: 8 }, (_, i) => i * 45);
  return (
    <svg viewBox="-13 -13 26 26" className="h-[26px] w-[26px]" fill="#999">
      {teeth.map((angle) => (
        <path key={angle} d="M-2.5 -13h5l1 6h-7z" transform={`rotate(${angle})`} />
      ))}
      <circle r="6.8" fill="none" stroke="#999" strokeWidth="4.5" />
    </svg>
  );
}

type TreeItem = { name: string; kind: 'settings' | 'folder'; hasEye?: boolean };

const treeItems: TreeItem[] = [
  { name: 'Document Settings', kind: 'settings' },
  { name: 'Named Views', kind: 'folder' },
  { name: 'Origin', kind: 'folder', hasEye: true },
  { name: 'Bodies', kind: 'folder', hasEye: true },
  { name: 'Sketches', kind: 'folder', hasEye: true },
];

function Grip() {
  return (
    <span className="flex gap-[2px]">
      <span className="h-[18px] w-[2px] bg-[#777]" />
      <span className="h-[14px] w-px self-center bg-[#999]" />
    </span>
  );
}

function BrowserPanel() {
  return (
    <aside className="w-[500px]">
      <div className="flex h-[41px] items-center border-2 border-[#d2d2d2] bg-[#f1f1f1] pl-[6px] text-[#5c5c5c]">
        <button type="button" aria-label="Collapse browser">
          <svg viewBox="0 0 16 11" className="h-[11px] w-4" fill="#2d2d2d">
            <path d="M8 0v11L0 5.5zM16 0v11L8 5.5z" />
          </svg>
        </button>
        <h2 className="ml-[18px] flex-1 text-lg leading-6">BROWSER</h2>
        <button type="button" aria-label="Hide browser" className="mr-3">
          <svg viewBox="0 0 14 14" className="h-[14px] w-[14px]">
            <rect width="14" height="14" rx="5" fill="#222" />
            <path d="M1.5 7h11" stroke="#eee" strokeWidth="1.5" />
          </svg>
        </button>
        <Grip />
      </div>
      <div className="mt-[9px] flex items-center gap-[17px] pl-[31px]">
        <button type="button" aria-label="Collapse SideProjectBaseFinal v1">
          <svg viewBox="0 0 13 12" className="h-3 w-[13px]">
            <path d="M12 1v10H1z" fill="#777" stroke="#111" strokeWidth="1.6" />
          </svg>
        </button>
        <div className="flex h-[33px] items-center bg-[#f1f1f1] pl-[5px] pr-3">
          <button type="button" aria-label="Toggle visibility">
            <EyeIcon />
          </button>
          <button
            type="button"
            className="ml-[10px] flex h-[27px] items-center gap-[25px] bg-[#979797] pl-[7px] pr-[19px] text-[19px] leading-[27px] font-bold text-white"
          >
            <svg viewBox="0 0 23 23" className="h-[23px] w-[23px]">
              <path d="M1 6l5-5h16v16l-5 5H1z" fill="#878d98" stroke="#3c3c3c" strokeWidth="1.4" strokeLinejoin="round" />
              <path d="M2 6.5h15.5V21H2z" fill="#d4dae4" />
              <path d="M2.5 6L6.5 2H21l-4 4z" fill="#f6f8fb" />
            </svg>
            SideProjectBaseFinal v1
          </button>
          <input
            type="radio"
            name="activeComponent"
            aria-label="Activate SideProjectBaseFinal v1"
            defaultChecked
            className="ml-[7px] h-[22px] w-[22px] appearance-none rounded-full border-2 border-[#55585e] bg-[radial-gradient(circle,#2f3238_0_4px,#d5dcec_5px)]"
          />
        </div>
      </div>
      <ul className="mt-[7px] flex flex-col gap-[7px] pl-[62px]">
        {treeItems.map((item) => (
          <li key={item.name} className="flex items-center gap-[18px]">
            <button type="button" aria-label={`Expand ${item.name}`}>
              <svg viewBox="0 0 11 16" className="h-4 w-[11px]">
                <path d="M1 1h2l7 7-7 7H1z" fill="#fff" stroke="#222" strokeWidth="1.3" />
              </svg>
            </button>
            <div className="flex h-[33px] items-center bg-[#f1f1f1] pl-[5px] pr-[13px]">
              {item.hasEye && (
                <button type="button" aria-label={`Toggle ${item.name}`} className="mr-[15px]">
                  <EyeIcon />
                </button>
              )}
              {item.kind === 'settings' ? <GearIcon /> : <FolderIcon />}
              <span className="ml-[23px] text-[19px] leading-6 text-[#3a3a3a]">{item.name}</span>
            </div>
          </li>
        ))}
      </ul>
    </aside>
  );
}

/* ---------- bottom of the canvas ---------- */

function Magnifier() {
  return (
    <>
      <path d="M16.5 16.5l8 8" stroke="#222c33" strokeWidth="4" strokeLinecap="round" />
      <circle cx="10" cy="10" r="8.8" fill="#e6f3f1" stroke="#3f474f" strokeWidth="1.5" />
      <path d="M4.5 9c1-3 3-4.5 6-5" stroke="#fff" strokeWidth="2" />
    </>
  );
}

const navTools = [
  {
    name: 'Orbit',
    caret: true,
    className: 'gap-2',
    icon: (
      <>
        <path d="M13 1l5 6h-2.5v18h-5V7H8z" fill="#eef0f3" stroke="#555a60" strokeWidth="1.2" />
        <path d="M10 11c-12 2-11 7 1 8M16 11c12 2 10 7 0 8" stroke="#3f444a" strokeWidth="1.6" />
        <path d="M4 17.5l6-3v6z" fill="#2d3136" />
      </>
    ),
  },
  {
    name: 'Look At',
    className: 'mr-[5px]',
    icon: (
      <>
        <path d="M2 8l6-5v4l9-3v4" fill="#a7abb0" stroke="#555a60" strokeWidth="1.2" />
        <path d="M1.5 9h23v15.5h-23z" fill="#f7f7f9" stroke="#4b5057" strokeWidth="1.5" />
        <path d="M5 13h16v7.5H5z" fill="#abb0b6" stroke="#4b5057" strokeWidth="1.5" />
      </>
    ),
  },
  {
    name: 'Pan',
    className: 'mr-[5px]',
    icon: (
      <path
        d="M9 24c-1-4-5-7-8-10 1-2 3-1.5 6 1L4 6c0-2 2.5-2.5 3.5 0l2 6L9 3c0-2.5 3-2.5 3.3 0l.7 8.5L14.5 2.5c.5-2 3.2-1.5 3 .8L17 12l3-6.5c1-2 3.5-1 2.8 1L20.5 15c0 4-1 5-2 9z"
        fill="#fafafa"
        stroke="#4b5057"
        strokeWidth="1.2"
        strokeLinejoin="round"
      />
    ),
  },
  {
    name: 'Zoom',
    className: 'mr-[5px]',
    icon: (
      <>
        <Magnifier />
        <path d="M19.5 4h6M22.5 1v6M19.5 9.5h6" stroke="#3f444a" strokeWidth="1.3" />
      </>
    ),
  },
  {
    name: 'Fit',
    caret: true,
    className: 'gap-2',
    icon: (
      <>
        <path d="M.8 .8h24.5v24.5H.8z" stroke="#777" strokeWidth="1.2" strokeDasharray="6 3" />
        <Magnifier />
      </>
    ),
  },
  {
    name: 'Display Settings',
    caret: true,
    className: 'gap-1',
    icon: (
      <>
        <path d="M.8 1h24.5v18.5H.8z" fill="#f2f3f5" stroke="#4b5057" strokeWidth="1.4" />
        <path d="M3.5 4h19v12.5h-19z" fill="#8db2e0" stroke="#4d72a5" strokeWidth="1.2" />
        <path d="M10 20h6v3h4v2H6v-2h4z" fill="#d3d6da" stroke="#4b5057" />
      </>
    ),
  },
  {
    name: 'Grid and Snaps',
    caret: true,
    className: 'gap-1',
    icon: (
      <>
        <path d="M1 1h24v24H1z" fill="#f7f7f7" stroke="#444" strokeWidth="1.5" />
        <path d="M4.5 1v24M8 1v24M11.5 1v24M15 1v24M18.5 1v24M22 1v24M1 4.5h24M1 8h24M1 11.5h24M1 15h24M1 18.5h24M1 22h24" stroke="#777" />
      </>
    ),
  },
  {
    name: 'Viewports',
    caret: true,
    className: 'gap-1',
    icon: (
      <path d="M1 3h12v10H1zM13 3h12v10H13zM1 13h12v10H1zM13 13h12v10H13z" fill="#84a9d9" stroke="#4a6893" strokeWidth="1.6" />
    ),
  },
];

function CanvasFooter() {
  return (
    <div className="flex items-start justify-between">
      <div className="flex h-[42px] w-[500px] items-center border-2 border-t-0 border-[#d2d2d2] bg-[#f1f1f1] pl-10 text-[#5c5c5c]">
        <h2 className="flex-1 text-lg leading-6">COMMENTS</h2>
        <button type="button" aria-label="Show comments" className="mr-3">
          <svg viewBox="0 0 14 14" className="h-[14px] w-[14px]">
            <rect width="14" height="14" rx="5" fill="#222" />
            <path d="M2 7h10M7 2v10" stroke="#eee" strokeWidth="1.5" />
          </svg>
        </button>
        <Grip />
      </div>
      <nav className="flex h-10 items-center gap-3 bg-[#f1f1f1] px-[6px]">
        {navTools.map((tool) => (
          <button key={tool.name} type="button" aria-label={tool.name} className={`flex items-center ${tool.className}`}>
            <svg viewBox="0 0 26 26" className="h-[26px] w-[26px]" fill="none">
              {tool.icon}
            </svg>
            {tool.caret && <Caret className="text-[#2d2d2d]" />}
          </button>
        ))}
      </nav>
      <div className="w-[500px]" />
    </div>
  );
}

/* ---------- timeline ---------- */

const playback = [
  { name: 'Go to start', d: 'M0 1h4v24H0zM21 2v22L4 13z' },
  { name: 'Step back', d: 'M17 1v24L0 13zM18 7h3.5v11H18z' },
  { name: 'Play', d: 'M1 0v26l19-13z' },
  { name: 'Step forward', d: 'M5 1v24l17-12zM.5 7H4v11H.5z' },
  { name: 'Go to end', d: 'M17 1h4v24h-4zM0 2v22l17-11z' },
];

const features = [
  { name: 'Sketch1', icon: <><SketchShape node="#1e90ea" /><PencilShape /></> },
  { name: 'Revolve1', icon: <RevolveShape /> },
  { name: 'Hole1', icon: <HoleShape /> },
  { name: 'Hole2', highlighted: true, icon: <HoleShape fill="#e2e21f" /> },
  {
    name: 'Align1',
    icon: (
      <>
        <path d="M2 0v54" stroke="#444" strokeWidth="2.5" />
        <path d="M6 9h20v16H6z" fill="#fff" stroke={LINE} strokeWidth="2" />
        <path d="M5 29h44v20H5z" fill={BLUE} stroke={BLUE_LINE} strokeWidth="1.5" />
      </>
    ),
  },
  { name: 'Sketch2', icon: <><SketchShape node="#1e90ea" /><PencilShape /></> },
  { name: 'Extrude1', icon: <ExtrudeShape /> },
  { name: 'Hole3', icon: <HoleShape /> },
];

function Timeline() {
  return (
    <footer className="relative flex h-[81px] items-start overflow-hidden border-t-2 border-[#c4c4c4] bg-[#f1f1f1]">
      <div className="absolute -bottom-10 left-[14%] right-[14%] h-10 shadow-[0_0_70px_16px_rgba(0,0,0,0.2)]" />
      <div className="relative mt-[26px] flex gap-[19px] pl-[18px]">
        {playback.map((control) => (
          <button key={control.name} type="button" aria-label={control.name}>
            <svg viewBox="0 0 22 26" className="h-[26px] w-[22px]" fill="#4a4a4a">
              <path d={control.d} />
            </svg>
          </button>
        ))}
      </div>
      <div className="relative mt-[17px] ml-[33px] flex">
        <ol className="flex">
          {features.map((feature, i) => (
            <li key={feature.name} className="flex w-10 flex-col items-center">
              <button
                type="button"
                aria-label={feature.name}
                className={`flex h-10 w-10 items-center justify-center rounded ${feature.highlighted ? 'bg-[#e2e21f]' : ''}`}
              >
                <Icon className="h-7 w-7">{feature.icon}</Icon>
              </button>
              <span className="flex w-full flex-col">
                <span className="h-2 w-[3px] self-center bg-[#c0c0c0]" />
                <span
                  className={
                    i === 0
                      ? 'h-[3px] w-[22px] self-end bg-[#c0c0c0]'
                      : i === features.length - 1
                        ? 'h-[3px] w-[22px] self-start bg-[#c0c0c0]'
                        : 'h-[3px] w-full bg-[#c0c0c0]'
                  }
                />
              </span>
            </li>
          ))}
        </ol>
        <svg viewBox="0 0 21 54" className="-mt-1 -ml-3 h-[54px] w-[21px]" fill="#666">
          <path d="M0 0h21v5l-8 9v40H8.5V14L0 5z" />
        </svg>
      </div>
      <button type="button" aria-label="Timeline settings" className="mt-[26px] mr-[22px] ml-auto">
        <GearIcon />
      </button>
    </footer>
  );
}

export default function App() {
  return (
    <div className="flex min-h-screen flex-col bg-[linear-gradient(90deg,#b3284e,#2f66a5_45%,#2b62a3)] pt-[3px] font-['Noto_Sans',sans-serif] text-[#333]">
      <div className="flex flex-1 flex-col overflow-hidden rounded-2xl bg-white">
        <TitleBar />
        <DocumentBar />
        <Ribbon />
        <main className="relative flex flex-1 flex-col justify-between bg-white">
          <Scene />
          <div className="relative flex items-start justify-between pt-[6px] pr-6 pl-[6px]">
            <BrowserPanel />
            <ViewCube />
          </div>
          <div className="relative px-[6px] pb-2">
            <CanvasFooter />
          </div>
        </main>
        <Timeline />
      </div>
    </div>
  );
}
